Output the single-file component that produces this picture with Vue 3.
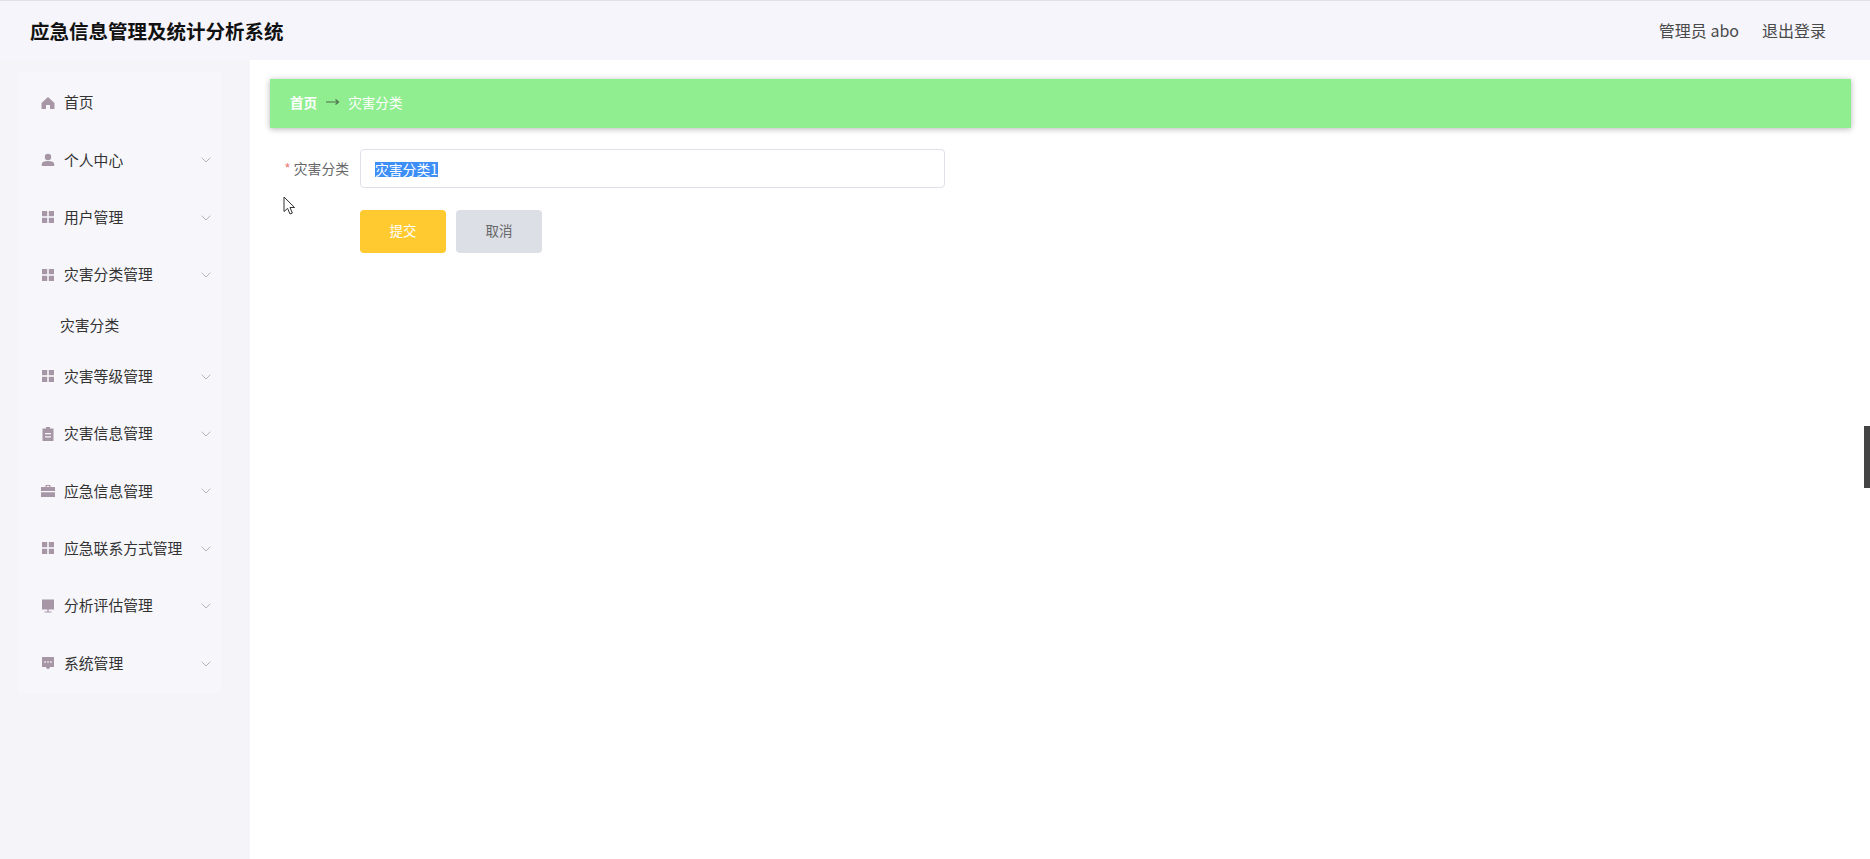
<script setup>
const items = [
  { label: '首页', icon: 'home', arrow: false },
  { label: '个人中心', icon: 'user', arrow: true },
  { label: '用户管理', icon: 'grid', arrow: true },
  { label: '灾害分类管理', icon: 'grid', arrow: true, sub: '灾害分类' },
  { label: '灾害等级管理', icon: 'grid', arrow: true },
  { label: '灾害信息管理', icon: 'clip', arrow: true },
  { label: '应急信息管理', icon: 'case', arrow: true },
  { label: '应急联系方式管理', icon: 'grid', arrow: true },
  { label: '分析评估管理', icon: 'monitor', arrow: true },
  { label: '系统管理', icon: 'chat', arrow: true },
]
</script>

<template>
  <div class="page">
    <header class="top">
      <div class="title">应急信息管理及统计分析系统</div>
      <div class="top-right">
        <span class="admin">管理员 abo</span>
        <span class="logout">退出登录</span>
      </div>
    </header>
    <div class="body">
      <aside class="side">
        <nav class="menu">
          <template v-for="it in items" :key="it.label">
            <div class="row">
              <svg class="ico" viewBox="0 0 14 14" width="14" height="14">
                <path v-if="it.icon === 'home'" d="M7 1 L13.5 7 V13 H9 V9 H5 V13 H.5 V7 Z" />
                <template v-else-if="it.icon === 'user'">
                  <circle cx="7" cy="4" r="3.2" />
                  <path d="M.8 13 V11 C.8 9 3 8 7 8 S13.2 9 13.2 11 V13 Z" />
                </template>
                <template v-else-if="it.icon === 'grid'">
                  <rect x="1" y="1" width="5.2" height="5.2" />
                  <rect x="7.8" y="1" width="5.2" height="5.2" />
                  <rect x="1" y="7.8" width="5.2" height="5.2" />
                  <rect x="7.8" y="7.8" width="5.2" height="5.2" />
                </template>
                <path v-else-if="it.icon === 'clip'" fill-rule="evenodd" d="M5 0 H9 V1.5 H12.5 V14 H1.5 V1.5 H5 Z M4 6 V7.2 H10 V6 Z M4 9.2 V10.4 H10 V9.2 Z" />
                <path v-else-if="it.icon === 'case'" fill-rule="evenodd" d="M4.5 3 V1 H9.5 V3 H14 V7 H0 V3 Z M5.7 3 H8.3 V2.1 H5.7 Z M0 8.2 H14 V13 H0 Z" />
                <path v-else-if="it.icon === 'monitor'" d="M1 .5 H13 V10.5 H1 Z M6.4 10.5 H7.6 V12.6 H10.5 V13.4 H3.5 V12.6 H6.4 Z" />
                <path v-else-if="it.icon === 'chat'" fill-rule="evenodd" d="M1 1 H13 V11 H9.5 L7 13.5 L4.5 11 H1 Z M3.4 5.2 V6.7 H4.9 V5.2 Z M6.25 5.2 V6.7 H7.75 V5.2 Z M9.1 5.2 V6.7 H10.6 V5.2 Z" />
              </svg>
              <span class="lbl">{{ it.label }}</span>
              <svg v-if="it.arrow" class="arrow" viewBox="0 0 10 6" width="10" height="6">
                <path d="M.7 .7 L5 5 L9.3 .7" />
              </svg>
            </div>
            <div v-if="it.sub" class="sub">{{ it.sub }}</div>
          </template>
        </nav>
      </aside>
      <main class="main">
        <div class="crumb">
          <span class="c1">首页</span>
          <svg class="c-arrow" viewBox="0 0 14 8" width="14" height="8">
            <path d="M0 4 H12 M9.5 1.5 L12.5 4 L9.5 6.5" />
          </svg>
          <span class="c2">灾害分类</span>
        </div>
        <div class="form-row">
          <div class="label"><span class="star">*</span> 灾害分类</div>
          <div class="input"><span class="selected">灾害分类1</span></div>
        </div>
        <div class="actions">
          <div class="btn submit">提交</div>
          <div class="btn cancel">取消</div>
        </div>
      </main>
    </div>
    <svg class="cursor" viewBox="0 0 13 20" width="13" height="20">
      <path d="M1 1 V15.5 L4.6 12.4 L7 18 L9.4 17 L7 11.5 H11.6 Z" />
    </svg>
    <div class="thumb"></div>
  </div>
</template>

<style>
html, body { margin: 0; background: #fff; overflow: hidden; }
</style>

<style scoped>
.page {
  width: 1870px;
  height: 859px;
  position: relative;
  overflow: hidden;
  display: flex;
  flex-direction: column;
  font-family: "Noto Sans CJK SC", "Noto Sans", sans-serif;
  color: #333;
}
.top {
  height: 60px;
  box-sizing: border-box;
  border-top: 1px solid #e0e0e8;
  background: #f5f5fb;
  display: flex;
  align-items: center;
  justify-content: space-between;
  padding: 0 44px 0 30px;
}
.title { font-size: 19.5px; font-weight: 700; color: #111; margin-bottom: 1px; }
.top-right { display: flex; gap: 23px; font-size: 16px; color: #4a4a4a; margin-bottom: 2px; }
.body { flex: 1; display: flex; min-height: 0; }
.side {
  width: 250px;
  flex: none;
  background: #f5f5f9;
  padding: 12px 29px 0 18px;
  box-sizing: border-box;
}
.menu {
  background: #f6f6fb;
  width: 203px;
  height: 621px;
  padding-top: 2px;
  box-sizing: border-box;
  display: flex;
  flex-direction: column;
}
.row {
  height: 57.4px;
  flex: none;
  display: flex;
  align-items: center;
  padding-left: 23px;
  position: relative;
}
.ico { fill: #a696a6; flex: none; }
.lbl { margin: 0 0 2px 9px; font-size: 14.8px; color: #333; white-space: nowrap; }
.arrow {
  position: absolute;
  left: 183px;
  top: 26px;
  fill: none;
  stroke: #b5b5b8;
  stroke-width: 1;
}
.sub {
  height: 42px;
  padding-bottom: 2px;
  flex: none;
  display: flex;
  align-items: center;
  padding-left: 42px;
  font-size: 14.8px;
  color: #333;
}
.main {
  flex: 1;
  padding: 19px 19px 0 20px;
  background: #fff;
}
.crumb {
  height: 46px;
  padding-bottom: 3px;
  background: #90ee90;
  box-shadow: 0 1px 6px rgba(0, 0, 0, 0.3);
  display: flex;
  align-items: center;
  padding-left: 20px;
  font-size: 13.6px;
  color: #fff;
}
.c1 { font-weight: 700; }
.c-arrow {
  margin: 0 8px 0 9px;
  fill: none;
  stroke: #4f6f4f;
  stroke-width: 1.2;
}
.form-row {
  display: flex;
  align-items: center;
  margin-top: 21px;
  height: 39px;
}
.label {
  width: 90px;
  flex: none;
  padding: 0 11px 1px 0;
  box-sizing: border-box;
  text-align: right;
  font-size: 13.8px;
  color: #666;
  white-space: nowrap;
}
.star { color: #f08080; }
.input {
  width: 585px;
  height: 39px;
  box-sizing: border-box;
  border: 1px solid #e0e0e8;
  border-radius: 4px;
  padding: 1px 0 0 14px;
  display: flex;
  align-items: center;
  font-size: 13.8px;
  background: #fff;
}
.selected { background: #3d8ff7; color: #fff; line-height: 15px; }
.actions {
  display: flex;
  gap: 10px;
  margin: 22px 0 0 90px;
}
.btn {
  width: 86px;
  height: 40px;
  padding-bottom: 3px;
  border-radius: 4px;
  display: flex;
  align-items: center;
  justify-content: center;
  font-size: 13.5px;
}
.submit { background: #ffca2f; color: #fff; }
.cancel { background: #dcdfe6; color: #666; }
.cursor {
  position: absolute;
  left: 283px;
  top: 196px;
  fill: #fff;
  stroke: #333;
  stroke-width: 1;
}
.thumb {
  position: absolute;
  right: 0;
  top: 426px;
  width: 6px;
  height: 62px;
  background: #444;
}
</style>
